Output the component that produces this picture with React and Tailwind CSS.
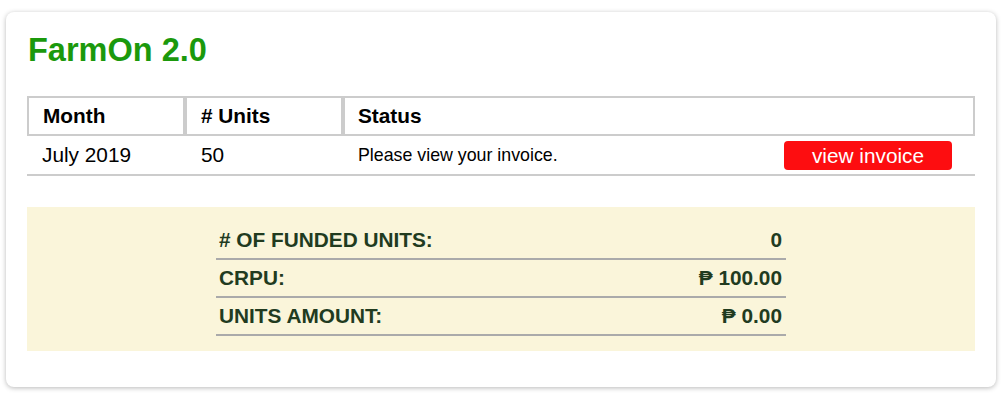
import React from 'react';

const rows = [
  { label: '# OF FUNDED UNITS:', value: '0' },
  { label: 'CRPU:', value: '₱ 100.00' },
  { label: 'UNITS AMOUNT:', value: '₱ 0.00' },
];

function App() {
  return (
    <div className="min-h-[394px] bg-white pt-[12px] pl-[6px] font-['Liberation_Sans',Arial,sans-serif]">
      <div className="w-[990px] h-[375px] rounded-[8px] bg-white shadow-[0_1px_5px_rgba(0,0,0,0.28)] px-[21px] pt-[20px]">
        {/* title */}
        <h1 className="text-[32.5px] leading-[37px] font-bold text-[#1b990c] pl-[1px]">FarmOn 2.0</h1>

        {/* invoice table */}
        <table className="mt-[27px] w-full table-fixed border-separate border-spacing-0 text-black">
          <colgroup>
            <col className="w-[158px]" />
            <col className="w-[158px]" />
            <col />
          </colgroup>
          <thead>
            <tr className="h-[40px]">
              <th className="border-2 border-[#cccccc] pl-[14px] text-left text-[20.8px] font-bold">Month</th>
              <th className="border-2 border-[#cccccc] pl-[14px] text-left text-[20.8px] font-bold">
                # Units
              </th>
              <th className="border-2 border-[#cccccc] pl-[13px] text-left text-[20.8px] font-bold">Status</th>
            </tr>
          </thead>
          <tbody>
            <tr className="h-[40px]">
              <td className="border-b-2 border-[#cccccc] pl-[15px] text-[20.8px]">July 2019</td>
              <td className="border-b-2 border-[#cccccc] pl-[16px] text-[20.8px]">50</td>
              <td className="border-b-2 border-[#cccccc] pl-[15px]">
                <div className="flex items-center justify-between pr-[23px]">
                  <span className="text-[17.8px]">Please view your invoice.</span>
                  <button className="w-[168px] h-[29px] rounded-[4px] bg-[#fd0d10] text-white text-[20.8px] leading-[29px]">
                    view invoice
                  </button>
                </div>
              </td>
            </tr>
          </tbody>
        </table>

        {/* summary */}
        <div className="mt-[31px] bg-[#faf5da] py-[15px]">
          <div className="mx-auto w-[570px]">
            {rows.map((r) => (
              <div
                key={r.label}
                className="flex h-[38px] items-center justify-between border-b-2 border-[#aaaaaa] pl-[3px] pr-[4px] text-[20.8px] font-bold text-[#213b1f]"
              >
                <span>{r.label}</span>
                <span>{r.value}</span>
              </div>
            ))}
          </div>
        </div>
      </div>
    </div>
  );
}

export default App;
